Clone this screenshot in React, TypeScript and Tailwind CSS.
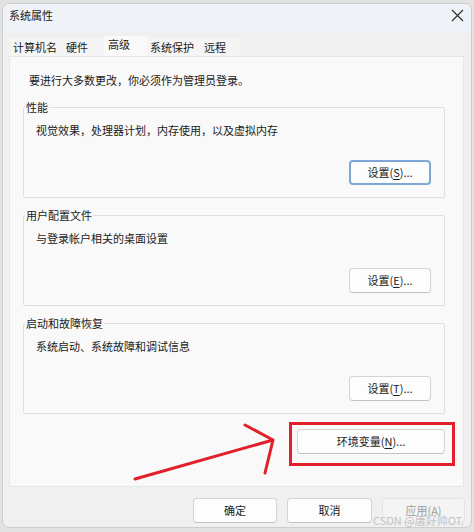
import type { ReactNode } from 'react';

const font = { fontFamily: '"Noto Sans CJK SC", "Noto Sans", sans-serif' };

function WinButton({ children, w, primary, disabled }: { children: ReactNode; w: string; primary?: boolean; disabled?: boolean }) {
  const base = 'h-[25px] rounded-[4px] flex items-center justify-center text-[11px] leading-none';
  const look = disabled
    ? 'bg-[#f4f4f4] border border-[#e3e3e3] text-[#9d9d9d]'
    : primary
      ? 'bg-[#fdfdfd] border-2 border-[#7ea7d6] text-[#1b1b1b]'
      : 'bg-[#fdfdfd] border border-[#d3d3d3] border-b-[#c2c2c2] text-[#1b1b1b]';
  return <div className={`${base} ${look} ${w}`}>{children}</div>;
}

function Group({ title, desc, btn }: { title: string; desc: string; btn: ReactNode }) {
  return (
    <fieldset className="w-[422px] border border-[#dedede] rounded-[2px]">
      <legend className="ml-[1px] px-[1px] text-[11px] leading-[16px] text-[#1b1b1b]">{title}</legend>
      <div className="pl-[12px] pt-[7px] text-[11px] leading-[16px] text-[#1b1b1b]">{desc}</div>
      <div className="mt-[22px] pr-[13px] pb-[12px] flex justify-end">{btn}</div>
    </fieldset>
  );
}

const acc = (s: string) => <span className="underline underline-offset-2">{s}</span>;

export default function App() {
  return (
    <div className="relative w-[474px] h-[532px] bg-[#e2e2e2] overflow-hidden" style={font}>
      <div className="mt-[3px] ml-[2px] w-[470px] h-[525px] bg-[#f0f0f0] rounded-[7px] border border-[#cdcdcd] flex flex-col overflow-hidden">
        {/* 标题栏 */}
        <div className="h-[28px] bg-[#eff2f6] flex items-start justify-between pt-[3px] pl-[6px] pr-[6px]">
          <span className="text-[11px] leading-[16px] text-[#1b1b1b]">系统属性</span>
          <svg width="13" height="13" viewBox="0 0 13 13" className="mr-[1px] mt-[2px]">
            <path d="M1 1 L12 12 M12 1 L1 12" stroke="#2a2a2a" strokeWidth="1.1" fill="none" />
          </svg>
        </div>

        {/* 选项卡 */}
        <div className="h-[24px] pt-[4px] pl-[7px] flex items-end text-[11px] text-[#1b1b1b]">
          <div className="w-[51px] h-[18px] bg-[#f5f5f5] pl-[3px] flex items-center">计算机名</div>
          <div className="w-[43px] h-[18px] bg-[#f5f5f5] pl-[5px] flex items-center">硬件</div>
          <div className="w-[43px] h-[20px] bg-[#f9f9f9] pl-[4px] pb-[4px] flex items-center">高级</div>
          <div className="w-[53px] h-[18px] bg-[#f5f5f5] pl-[3px] flex items-center">系统保护</div>
          <div className="w-[40px] h-[18px] bg-[#f5f5f5] pl-[4px] flex items-center">远程</div>
        </div>

        {/* 面板 */}
        <div className="ml-[6px] w-[455px] h-[431px] bg-[#f9f9f9] border border-[#e6e6e6] pl-[13px] pt-[15px] flex flex-col">
          <div className="pl-[6px] text-[11px] leading-[16px] text-[#1b1b1b]">要进行大多数更改，你必须作为管理员登录。</div>
          <div className="mt-[11px] flex flex-col gap-[9px]">
            <Group title="性能" desc="视觉效果，处理器计划，内存使用，以及虚拟内存"
              btn={<WinButton w="w-[82px]" primary>设置({acc('S')})...</WinButton>} />
            <Group title="用户配置文件" desc="与登录帐户相关的桌面设置"
              btn={<WinButton w="w-[82px]">设置({acc('E')})...</WinButton>} />
            <Group title="启动和故障恢复" desc="系统启动、系统故障和调试信息"
              btn={<WinButton w="w-[82px]">设置({acc('T')})...</WinButton>} />
          </div>
          <div className="mt-[15px] w-[422px] flex justify-end">
            <WinButton w="w-[148px]">环境变量({acc('N')})...</WinButton>
          </div>
        </div>

        {/* 底部按钮 */}
        <div className="mt-[11px] flex justify-end gap-[10px] pr-[6px]">
          <WinButton w="w-[84px]">确定</WinButton>
          <WinButton w="w-[85px]">取消</WinButton>
          <WinButton w="w-[83px]" disabled>应用(A)</WinButton>
        </div>
      </div>

      {/* 红色标注 */}
      <svg className="absolute left-0 top-0 pointer-events-none" width="474" height="532" viewBox="0 0 474 532">
        <rect x="290.5" y="423.5" width="163" height="41" fill="none" stroke="#e1202b" strokeWidth="3" />
        <path d="M135 479 L273 440 M245 425 L273 440 L265 473" fill="none" stroke="#e1202b" strokeWidth="3" strokeLinecap="round" strokeLinejoin="round" />
      </svg>

      <div className="absolute left-[373px] top-[512px] text-[11px] leading-[16px] text-[#c4c4c4] whitespace-nowrap">CSDN @唐好帅OT.</div>
    </div>
  );
}
